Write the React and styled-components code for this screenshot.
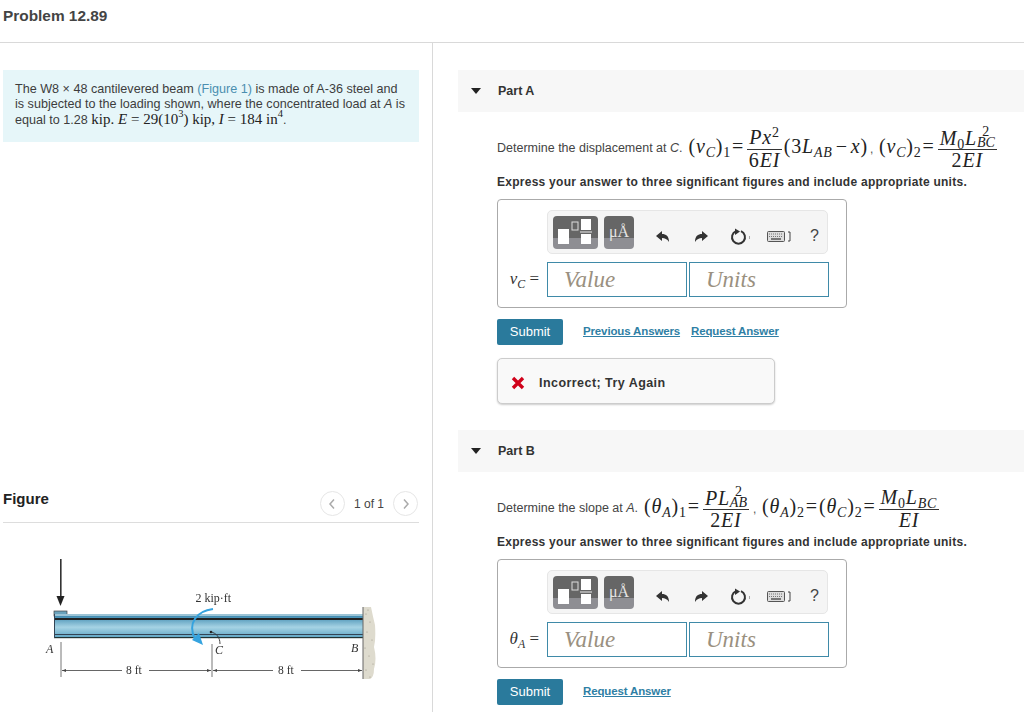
import React from "react";
import styled, { createGlobalStyle } from "styled-components";

const Global = createGlobalStyle`
  html, body { margin: 0; padding: 0; background: #fff; }
  body { font-family: "Liberation Sans", Arial, sans-serif; color: #333; }
  * { box-sizing: border-box; }
`;

const Page = styled.div`
  width: 1024px; height: 712px; overflow: hidden; display: flex; flex-direction: column;
`;
const Header = styled.header`
  height: 43px; flex: none; border-bottom: 1px solid #d9d9d9; padding: 7px 0 0 3px;
  font-size: 15.4px; font-weight: 700; line-height: 17px; color: #444;
`;
const Body = styled.div`display: flex; flex: 1; min-height: 0;`;
const LeftPane = styled.aside`
  width: 433px; flex: none; border-right: 1px solid #d9d9d9; padding: 27px 13px 0 3px;
  display: flex; flex-direction: column;
`;
const Intro = styled.div`
  height: 72px; background: #e6f6f9; padding: 12px 12px 0; font-size: 12.6px; line-height: 15px; color: #3d3d3d;
`;
const IntroLink = styled.span`color: #4a8fb0;`;
const FigureHead = styled.div`
  margin-top: 342px; height: 39px; border-bottom: 1px solid #ddd; display: flex; align-items: flex-start;
  justify-content: space-between;
`;
const FigureTitle = styled.div`font-size: 15px; font-weight: 700; line-height: 17px; margin-top: 6px; color: #222;`;
const Pager = styled.div`display: flex; align-items: center; gap: 9px; font-size: 12px; color: #444; margin: 7px 1px 0 0;`;
const PagerBtn = styled.span`
  width: 25px; height: 25px; border: 1px solid #e6e6e6; border-radius: 50%; display: flex; align-items: center; justify-content: center;
`;
const FigureArt = styled.svg`display: block; margin: -1px 0 0 -3px; filter: blur(0.35px);`;

const RightPane = styled.main`flex: 1; min-width: 0; padding-top: 27px;`;
const Section = styled.section`margin-bottom: 26px;`;
const PartBar = styled.div`
  margin-left: 25px; height: 42px; background: #f7f7f7; display: flex; align-items: center; padding-left: 13px;
  font-size: 12.5px; font-weight: 700; color: #333; gap: 17px;
`;
const Caret = styled.span`
  width: 0; height: 0; border-left: 5px solid transparent; border-right: 5px solid transparent; border-top: 6px solid #222;
`;
const Content = styled.div`padding-left: 64px;`;
const Prompt = styled.div`
  margin-top: 13px; height: 46px; display: flex; align-items: center; gap: 6px; font-size: 12.5px; color: #444; white-space: nowrap;
`;
const Instruction = styled.div`
  margin-top: 3px; font-size: 12px; line-height: 16px; font-weight: 700; color: #333; letter-spacing: 0.26px;
`;
const AnswerBox = styled.div`
  margin-top: 9px; width: 350px; height: 109px; border: 1px solid #aaa; border-radius: 4px; padding: 10px 0 0 49px; position: relative;
`;
const Toolbar = styled.div`
  width: 281px; height: 44px; background: #f5f5f5; border: 1px solid #e6e6e6; border-radius: 5px;
  display: flex; align-items: center; padding: 0 0 0 5px;
`;
const ToolBtn = styled.div`
  width: ${(p) => p.$w}px; height: 33px; margin-right: 6px; border-radius: 4px; flex: none;
  background: linear-gradient(#666 0 66%, #8e8e93 66%); display: flex; align-items: center; justify-content: center;
  color: #e4e4e4; font-family: "Liberation Serif", serif; font-size: 16px; line-height: 1;
`;
const ToolIcon = styled.svg`flex: none; margin: 9px 0 0 ${(p) => p.$ml}px; display: block;`;
const Help = styled.span`margin: 7px 0 0 17px; font-size: 16px; color: #444; line-height: 1;`;
const InputRow = styled.div`display: flex; align-items: center; gap: 2px; margin-top: 8px; position: relative;`;
const VarLabel = styled.div`
  position: absolute; right: 100%; margin-right: 8px; top: 8px; font: italic 17px/18px "Liberation Serif", serif; color: #333; white-space: nowrap;
`;
const Eq = styled.span`font-style: normal;`;
const Field = styled.div`
  width: 140px; height: 35px; border: 1px solid #3f8aa8; padding-left: 16px;
  font: italic 23px/33px "Liberation Serif", serif; color: #9a9080;
`;
const Actions = styled.div`margin-top: 11px; display: flex; align-items: center; height: 26px;`;
const Submit = styled.div`
  width: 66px; height: 26px; background: #2a7a9c; border-radius: 2px; color: #fff; font-size: 13px; line-height: 26px; text-align: center; margin-right: ${(p) => p.$gap}px;
`;
const LinkText = styled.span`
  font-size: 11.5px; font-weight: 700; color: #2f7fa5; text-decoration: underline; margin: -2px 11px 0 0; letter-spacing: -0.14px;
`;
const Feedback = styled.div`
  margin-top: 13px; width: 278px; height: 46px; background: #f9f9f9; border: 1px solid #ccc; border-radius: 5px;
  box-shadow: 0 1px 2px rgba(0,0,0,.2); display: flex; align-items: center; padding: 3px 0 0 13px; gap: 14px;
  font-size: 12.5px; font-weight: 700; color: #333; letter-spacing: 0.45px;
`;

/* math */
const M = styled.span`
  font-family: "Liberation Serif", serif; font-size: ${(p) => p.$s || 20}px; letter-spacing: ${(p) => p.$ls || 0}px; color: #222; display: inline-block; white-space: nowrap;
`;
const I = styled.i`font-style: italic;`;
const Frac = styled.span`
  display: inline-flex; flex-direction: column; align-items: center; margin: 0 2px; vertical-align: middle;
`;
const Num = styled.span`
  padding: 0 2px; border-bottom: 1px solid #333; line-height: 22px; height: 24px; display: block; text-align: center; white-space: nowrap;
`;
const Den = styled.span`line-height: 21px; height: 21px; white-space: nowrap;`;
const Sub = styled.sub`font-size: 0.7em; line-height: 0; vertical-align: -4px;`;
const Sup = styled.sup`font-size: 0.7em; line-height: 0; vertical-align: 7px;`;
const Stack = styled.span`
  display: inline-flex; flex-direction: column; font-size: 14px; line-height: 10px; letter-spacing: 0; font-style: italic; vertical-align: 9px;
`;
const StackTop = styled.span`font-style: normal; line-height: 12px;`;
const Op = styled.span`margin: 0 ${(p) => p.$m || 1}px;`;
const Comma = styled.span`font-family: "Liberation Sans", sans-serif; font-size: 12px; color: #555; margin: 0 5px 0 2px;`;
const InlineDot = styled.span`font-family: "Liberation Sans", sans-serif; font-size: 12.5px;`;

function Brace({ s, sub, n }) {
  return <span>(<I>{s}</I><Sub><I>{sub}</I></Sub>)<Sub>{n}</Sub></span>;
}

function Tools() {
  return (
    <Toolbar>
      <ToolBtn $w={45}>
        <svg width="38" height="26" viewBox="0 0 38 26">
          <rect x="1" y="10" width="11" height="15" fill="#fff" />
          <rect x="15" y="3" width="6" height="8" fill="none" stroke="#ddd" />
          <rect x="24" y="0" width="10" height="11" fill="#fff" />
          <rect x="23" y="12.5" width="12" height="1" fill="#eee" />
          <rect x="24" y="15" width="10" height="10" fill="#fff" />
        </svg>
      </ToolBtn>
      <ToolBtn $w={30}>μÅ</ToolBtn>
      <ToolIcon $ml={15} width="16" height="16" viewBox="0 0 16 16">
        <path d="M1 7 L7 2 V5 C11 5 14 7 14 13 C12 10 10 9 7 9 V12 Z" fill="#333" />
      </ToolIcon>
      <ToolIcon $ml={22} width="16" height="16" viewBox="0 0 16 16">
        <path d="M15 7 L9 2 V5 C5 5 2 7 2 13 C4 10 6 9 9 9 V12 Z" fill="#333" />
      </ToolIcon>
      <ToolIcon $ml={21} width="24" height="18" viewBox="0 0 24 18">
        <path d="M6 3.2 A6.5 6.5 0 1 0 11 3.2" fill="none" stroke="#333" strokeWidth="2" />
        <path d="M5 0.5 L10 3.5 L5 7 Z" fill="#333" />
        <rect x="19" y="8" width="1" height="3" fill="#aaa" />
      </ToolIcon>
      <ToolIcon $ml={13} width="26" height="14" viewBox="0 0 26 14">
        <rect x="0.5" y="1.5" width="17" height="10" rx="1" fill="#ddd" stroke="#555" />
        <path d="M2 4h14M2 6.5h14" stroke="#777" strokeDasharray="1 1" />
        <rect x="4" y="8" width="10" height="2" fill="#777" />
        <path d="M21 2h2v9h-2" fill="none" stroke="#444" />
      </ToolIcon>
      <Help>?</Help>
    </Toolbar>
  );
}

function Answer({ label }) {
  return (
    <AnswerBox>
      <Tools />
      <InputRow>
        <VarLabel>{label}</VarLabel>
        <Field>Value</Field>
        <Field>Units</Field>
      </InputRow>
    </AnswerBox>
  );
}

function Beam() {
  const serif = { fontFamily: '"Liberation Serif", serif', fill: "#333" };
  const specks = [[366,92],[370,100],[367,110],[372,118],[365,126],[369,134],[373,142],[366,148],[370,155],[368,88]];
  return (
    <FigureArt width="430" height="190" viewBox="0 0 430 190">
      <defs>
        <linearGradient id="web" x1="0" y1="0" x2="0" y2="1">
          <stop offset="0" stopColor="#2f7fa8" />
          <stop offset="0.55" stopColor="#a6d3e4" />
          <stop offset="1" stopColor="#5ca4c4" />
        </linearGradient>
      </defs>
      <path d="M371 85 q2 10 4 18 q1 14 -1 22 q3 12 0 22 q0 8 -4 10 l-7 0 v-72z" fill="#dedbce" />
      {specks.map(([x, y]) => <circle key={`${x}-${y}`} cx={x} cy={y} r="0.6" fill="#9a9788" />)}
      <rect x="54" y="89" width="13" height="5" fill="#6aa3bd" stroke="#444" strokeWidth="0.7" />
      <rect x="54" y="92" width="309" height="24" fill="url(#web)" />
      <rect x="54" y="92" width="309" height="2" fill="#9cc4d6" />
      <rect x="54" y="96" width="309" height="2" fill="#222" />
      <rect x="54" y="112" width="309" height="1" fill="#345" />
      <rect x="54" y="115" width="309" height="1.2" fill="#233" />
      <rect x="54" y="92" width="1" height="24" fill="#345" />
      <rect x="60" y="37" width="1.6" height="38" fill="#333" />
      <path d="M56.5 74 h8 l-4 10z" fill="#222" />
      <rect x="362.5" y="85" width="1" height="72" fill="#666" />
      <path d="M61 120 V155 M212 122 V155" stroke="#777" />
      <path d="M62 148.5 H122 M149 148.5 H211 M213 148.5 H273 M301 148.5 H362" stroke="#666" />
      <path d="M62 148.5 l4 -1.5 v3z M211 148.5 l-4 -1.5 v3z M213 148.5 l4 -1.5 v3z M362 148.5 l-4 -1.5 v3z" fill="#444" />
      <path d="M213 87 C197 89 187 101 195 117" fill="none" stroke="#35a3df" strokeWidth="2" />
      <path d="M203 123 L192 118 L199 111z" fill="#35a3df" />
      <circle cx="211" cy="110" r="1.3" fill="#222" />
      <path d="M211 110 C216 111 220 115 220 122" fill="none" stroke="#333" strokeWidth="0.9" />
      <text x="195.5" y="80" fontSize="12" {...serif}>2 kip·ft</text>
      <text x="126" y="152" fontSize="11.5" {...serif}>8 ft</text>
      <text x="278" y="152" fontSize="11.5" {...serif}>8 ft</text>
      <text x="46" y="131" fontSize="12" fontStyle="italic" {...serif}>A</text>
      <text x="215" y="132" fontSize="12" fontStyle="italic" {...serif}>C</text>
      <text x="351" y="130" fontSize="12" fontStyle="italic" {...serif}>B</text>
    </FigureArt>
  );
}

export default function App() {
  return (
    <Page>
      <Global />
      <Header>Problem 12.89</Header>
      <Body>
        <LeftPane>
          <Intro>
            The W8 × 48 cantilevered beam <IntroLink>(Figure 1)</IntroLink> is made of A-36 steel and is subjected to the loading shown, where the concentrated load at <i>A</i> is equal to 1.28 <M $s={15}>kip.&nbsp;<I>E</I>&nbsp;=&nbsp;29(10<Sup>3</Sup>)&nbsp;kip,&nbsp;<I>I</I>&nbsp;=&nbsp;184&nbsp;in<Sup>4</Sup></M><InlineDot>.</InlineDot>
          </Intro>
          <FigureHead>
            <FigureTitle>Figure</FigureTitle>
            <Pager>
              <PagerBtn>
                <svg width="8" height="12" viewBox="0 0 8 12"><path d="M6 1.5 L2 6 L6 10.5" fill="none" stroke="#aaa" strokeWidth="1.5" /></svg>
              </PagerBtn>
              1 of 1
              <PagerBtn>
                <svg width="8" height="12" viewBox="0 0 8 12"><path d="M2 1.5 L6 6 L2 10.5" fill="none" stroke="#aaa" strokeWidth="1.5" /></svg>
              </PagerBtn>
            </Pager>
          </FigureHead>
          <Beam />
        </LeftPane>
        <RightPane>
          <Section>
            <PartBar><Caret />Part A</PartBar>
            <Content>
              <Prompt>
                <span>Determine the displacement at <i>C</i>.</span>
                <M $ls={0.8}>
                  <Brace s="v" sub="C" n="1" /><Op>=</Op>
                  <Frac><Num><I>Px</I><Sup>2</Sup></Num><Den>6<I>EI</I></Den></Frac>
                  (3<I>L</I><Sub><I>AB</I></Sub><Op $m={3}>−</Op><I>x</I>)
                  <Comma>,</Comma>
                  <Brace s="v" sub="C" n="2" /><Op>=</Op>
                  <Frac><Num><I>M</I><Sub>0</Sub><I>L</I><Stack><StackTop>2</StackTop>BC</Stack></Num><Den>2<I>EI</I></Den></Frac>
                </M>
              </Prompt>
              <Instruction>Express your answer to three significant figures and include appropriate units.</Instruction>
              <Answer label={<>v<Sub>C</Sub> <Eq>=</Eq></>} />
              <Actions>
                <Submit $gap={20}>Submit</Submit>
                <LinkText>Previous Answers</LinkText>
                <LinkText>Request Answer</LinkText>
              </Actions>
              <Feedback>
                <svg width="14" height="14" viewBox="0 0 14 14"><path d="M2 2 L12 12 M12 2 L2 12" stroke="#d0021b" strokeWidth="3.4" /></svg>
                Incorrect; Try Again
              </Feedback>
            </Content>
          </Section>
          <Section>
            <PartBar><Caret />Part B</PartBar>
            <Content>
              <Prompt>
                <span>Determine the slope at <i>A</i>.</span>
                <M $ls={0.8}>
                  <Brace s="θ" sub="A" n="1" /><Op>=</Op>
                  <Frac><Num><I>PL</I><Stack><StackTop>2</StackTop>AB</Stack></Num><Den>2<I>EI</I></Den></Frac>
                  <Comma>,</Comma>
                  <Brace s="θ" sub="A" n="2" /><Op>=</Op><Brace s="θ" sub="C" n="2" /><Op>=</Op>
                  <Frac><Num><I>M</I><Sub>0</Sub><I>L</I><Sub><I>BC</I></Sub></Num><Den><I>EI</I></Den></Frac>
                </M>
              </Prompt>
              <Instruction>Express your answer to three significant figures and include appropriate units.</Instruction>
              <Answer label={<>θ<Sub>A</Sub> <Eq>=</Eq></>} />
              <Actions>
                <Submit $gap={20}>Submit</Submit>
                <LinkText>Request Answer</LinkText>
              </Actions>
            </Content>
          </Section>
        </RightPane>
      </Body>
    </Page>
  );
}
